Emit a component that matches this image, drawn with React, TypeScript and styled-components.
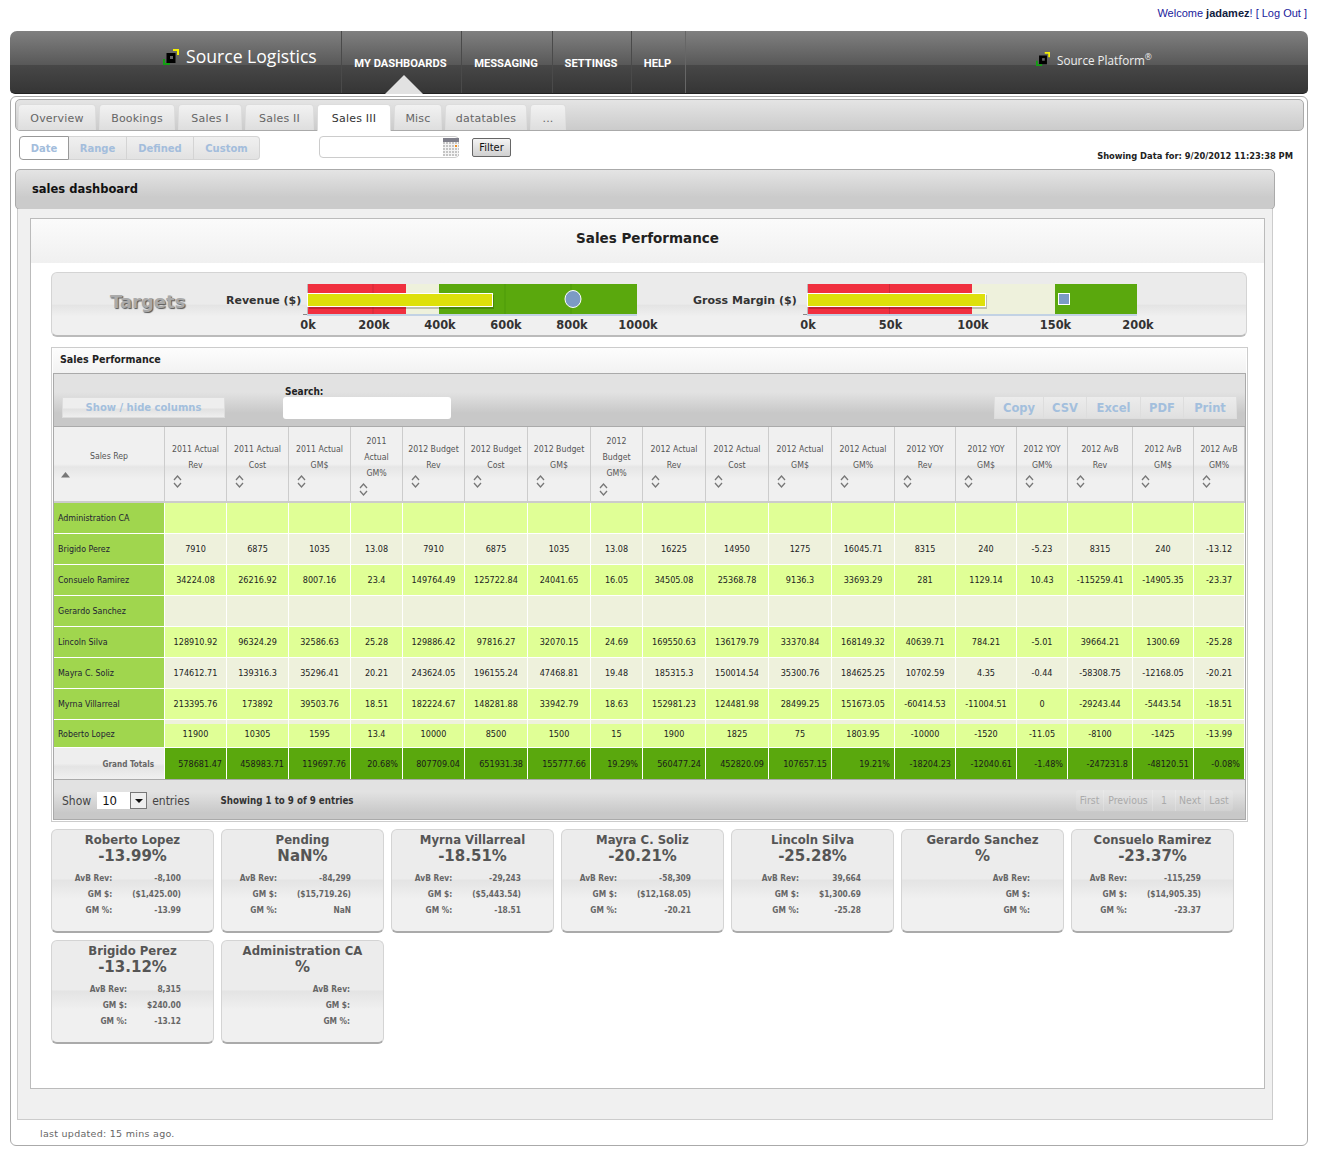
import styled, { createGlobalStyle } from "styled-components"

const GlobalStyle = createGlobalStyle`
    html, body {
        margin: 0;
        padding: 0;
        background: #fff;
    }
    body {
        font-family: "DejaVu Sans", Verdana, sans-serif;
        color: #333;
    }
`

const narrow = `"DejaVu Sans Condensed", "DejaVu Sans", sans-serif`

const Page = styled.div`
    width: 1319px;
    box-sizing: border-box;
    padding: 0 11px 9px 10px;
`

const TopBar = styled.div`
    height: 31px;
    box-sizing: border-box;
    padding: 6px 1px 0 0;
    text-align: right;
    font-family: "Liberation Sans", Arial, sans-serif;
    font-size: 11px;
    line-height: 14px;
    color: #1a1a9c;
    b {
        color: #102040;
    }
`

const Header = styled.div`
    position: relative;
    display: flex;
    height: 63px;
    box-sizing: border-box;
    border-radius: 7px 7px 5px 5px;
    border-bottom: 1px solid #222;
    background: linear-gradient(#808080 0%, #585858 55%, #474747 55.5%, #353535 100%);
`

const Brand = styled.div`
    width: 331px;
    box-sizing: border-box;
    padding: 13px 0 0 153px;
    display: flex;
    align-items: flex-start;
    gap: 7px;
    font-family: "Open Sans", sans-serif;
    font-size: 17.6px;
    line-height: 24px;
    color: #fff;
`

const NavItem = styled.div<{ $w: number }>`
    width: ${(p) => p.$w}px;
    box-sizing: border-box;
    padding: 25px 2px 0 0;
    border-left: 1px solid #4a4a4a;
    border-right: 1px solid #666;
    margin-right: -1px;
    text-align: center;
    font-family: Roboto, sans-serif;
    font-weight: 700;
    font-size: 11.2px;
    line-height: 16px;
    color: #fff;
`

const NavArrow = styled.div`
    position: absolute;
    left: 375px;
    bottom: -1px;
    width: 0;
    height: 0;
    border-left: 19px solid transparent;
    border-right: 19px solid transparent;
    border-bottom: 19px solid #e2e2e2;
`

const PlatformBrand = styled.div`
    margin-left: 351px;
    padding-top: 20px;
    display: flex;
    align-items: flex-start;
    gap: 7px;
    font-family: "Open Sans", sans-serif;
    font-size: 11.7px;
    line-height: 18px;
    color: #eee;
    sup {
        font-size: 8.5px;
        line-height: 0;
    }
`

const Content = styled.div`
    margin-top: 2px;
    height: 1050px;
    box-sizing: border-box;
    border: 1px solid #aaa;
    border-radius: 6px;
    padding: 2px 3px 0 4px;
`

const TabBar = styled.div`
    display: flex;
    align-items: flex-end;
    gap: 3px;
    height: 32px;
    box-sizing: border-box;
    padding-left: 2px;
    border: 1px solid #aaa;
    border-radius: 5px;
    background: linear-gradient(#e4e4e4, #cbcbcb);
`

const Tab = styled.div<{ $w: number; $active?: boolean }>`
    width: ${(p) => p.$w}px;
    height: ${(p) => (p.$active ? 27 : 26)}px;
    margin-bottom: ${(p) => (p.$active ? -1 : 0)}px;
    box-sizing: border-box;
    border: 1px solid #ddd;
    border-bottom: 0;
    border-radius: 4px 4px 0 0;
    background: ${(p) => (p.$active ? "#fff" : "linear-gradient(#f2f2f2, #dedede)")};
    text-align: center;
    font-size: 11px;
    letter-spacing: 0.2px;
    line-height: 27px;
    color: ${(p) => (p.$active ? "#333" : "#666")};
`

const Controls = styled.div`
    display: flex;
    align-items: flex-start;
    height: 38px;
    box-sizing: border-box;
    padding: 5px 11px 0 4px;
`

const Segments = styled.div`
    display: flex;
    height: 24px;
`

const Segment = styled.div<{ $w: number; $active?: boolean }>`
    width: ${(p) => p.$w}px;
    box-sizing: border-box;
    border: 1px solid ${(p) => (p.$active ? "#999" : "#d4d4d4")};
    border-left-width: ${(p) => (p.$active ? 1 : 0)}px;
    border-radius: ${(p) => (p.$active ? "4px 0 0 4px" : 0)};
    background: ${(p) => (p.$active ? "#fff" : "linear-gradient(#f0f0f0, #e2e2e2)")};
    text-align: center;
    font-size: 10px;
    font-weight: 700;
    line-height: 23px;
    color: #a3bddc;
    &:last-child {
        border-radius: 0 4px 4px 0;
    }
`

const DateInput = styled.div`
    display: flex;
    justify-content: flex-end;
    align-items: center;
    width: 140px;
    height: 22px;
    box-sizing: border-box;
    margin-left: 59px;
    border: 1px solid #ccc;
    border-radius: 4px;
    background: #fff;
    svg {
        margin-right: -1px;
    }
`

const FilterButton = styled.div`
    width: 39px;
    height: 19px;
    box-sizing: border-box;
    margin: 2px 0 0 13px;
    border: 1px solid #666;
    border-radius: 2px;
    background: linear-gradient(#f4f4f4, #d0d0d0);
    text-align: center;
    font-family: ${narrow};
    font-size: 11px;
    line-height: 18px;
    color: #111;
`

const ShowingData = styled.div`
    margin: 14px 0 0 auto;
    font-family: ${narrow};
    font-size: 9.25px;
    font-weight: 700;
    line-height: 12px;
    color: #222;
`

const DashBar = styled.div`
    width: 1260px;
    height: 41px;
    box-sizing: border-box;
    padding-left: 16px;
    border: 1px solid #aaa;
    border-radius: 5px;
    background: linear-gradient(#e4e4e4, #cbcbcb 70%);
    font-size: 11.5px;
    font-weight: 700;
    line-height: 38px;
    color: #111;
`

const GrayPanel = styled.div`
    width: 1256px;
    height: 911px;
    box-sizing: border-box;
    margin: -1px 0 0 2px;
    padding: 9px 7px 0 12px;
    border: 1px solid #ccc;
    border-top: 0;
    background: #f0f0f0;
`

const MainPanel = styled.div`
    width: 1235px;
    height: 871px;
    box-sizing: border-box;
    border: 1px solid #bbb;
    background: #fff;
`

const PanelTitle = styled.div`
    height: 44px;
    background: linear-gradient(#fbfbfb, #f0f0f0);
    text-align: center;
    font-size: 13.5px;
    font-weight: 700;
    line-height: 38px;
    color: #222;
`

const PanelBody = styled.div`
    padding: 9px 0 0 20px;
`

const TargetsBox = styled.div`
    display: flex;
    align-items: flex-start;
    width: 1196px;
    height: 65px;
    box-sizing: border-box;
    padding: 11px 0 0 58px;
    border: 1px solid #d4d4d4;
    border-bottom: 2px solid #bbb;
    border-radius: 6px;
    background: linear-gradient(#ebebeb 50%, #e4e4e4 52%, #f0f0f0 70%);
`

const TargetsTitle = styled.div`
    width: 116px;
    margin-top: 6px;
    font-size: 18px;
    font-weight: 700;
    line-height: 24px;
    color: #aaa;
    text-shadow: 1px 1px 1px #555;
`

const MetricLabel = styled.div<{ $w: number }>`
    width: ${(p) => p.$w}px;
    margin-top: 10px;
    white-space: nowrap;
    font-size: 11px;
    font-weight: 700;
    line-height: 14px;
    color: #333;
`

const ChartSvg = styled.svg`
    display: block;
    flex: none;
    margin-right: 26px;
    text {
        font-family: "DejaVu Sans", sans-serif;
        font-size: 11.4px;
        font-weight: 700;
        fill: #333;
        text-anchor: middle;
    }
`

const TableBox = styled.div`
    width: 1197px;
    box-sizing: border-box;
    margin-top: 10px;
    padding: 0 1px 1px 1px;
    border: 1px solid #ccc;
    background: #fff;
`

const TableTitle = styled.div`
    height: 25px;
    padding-left: 7px;
    background: linear-gradient(#fdfdfd, #f2f2f2);
    font-family: ${narrow};
    font-size: 10.6px;
    font-weight: 700;
    line-height: 22px;
    color: #222;
`

const TableFrame = styled.div`
    width: 1193px;
    box-sizing: border-box;
    border: 1px solid #aaa;
`

const TableToolbar = styled.div`
    display: flex;
    align-items: flex-start;
    height: 53px;
    box-sizing: border-box;
    padding: 10px 8px 0 8px;
    border-bottom: 1px solid #aaa;
    background: linear-gradient(#e2e2e2 35%, #c8c8c8 75%);
`

const ColumnsButton = styled.div`
    width: 163px;
    height: 21px;
    margin-top: 13px;
    box-sizing: border-box;
    border: 1px solid #ddd;
    background: linear-gradient(#eeeeee 50%, #e2e2e2 60%, #eeeeee);
    text-align: center;
    font-size: 10px;
    font-weight: 700;
    line-height: 19px;
    color: #a3bfdd;
`

const SearchGroup = styled.div`
    margin-left: 58px;
    font-family: ${narrow};
    font-size: 10px;
    font-weight: 700;
    line-height: 13px;
    color: #222;
    span {
        display: block;
        padding: 1px 0 0 2px;
        margin-bottom: -1px;
    }
`

const SearchField = styled.div`
    width: 168px;
    height: 22px;
    border-radius: 3px;
    background: #fff;
`

const ExportGroup = styled.div`
    display: flex;
    height: 23px;
    margin: 12px 0 0 auto;
`

const ExportButton = styled.div<{ $w: number }>`
    width: ${(p) => p.$w}px;
    box-sizing: border-box;
    border: 1px solid #ddd;
    border-left-width: 0;
    background: linear-gradient(#ececec, #e0e0e0);
    text-align: center;
    font-size: 11.5px;
    font-weight: 700;
    line-height: 22px;
    color: #a3bfdd;
    &:first-child {
        border-left-width: 1px;
    }
`

const Grid = styled.table`
    table-layout: fixed;
    width: 1191px;
    border-collapse: separate;
    border-spacing: 0;
    font-family: ${narrow};
    font-size: 9px;
`

const GridCol = styled.col<{ $w: number }>`
    width: ${(p) => p.$w}px;
`

const HeadCell = styled.th<{ $sorted?: boolean }>`
    height: 76px;
    box-sizing: border-box;
    padding: ${(p) => (p.$sorted ? 8 : 4)}px 2px 0;
    border-right: 1px solid #ccc;
    border-bottom: 2px solid #ccc;
    background: linear-gradient(#f0f0f0 50%, #e6e6e6 54%, #f0f0f0 70%);
    font-size: 8.7px;
    font-weight: 400;
    line-height: 16px;
    color: #555;
    text-align: center;
    white-space: pre-line;
`

const SortHolder = styled.span`
    display: block;
    height: 16px;
    padding-left: 6px;
    text-align: left;
    svg {
        display: block;
        margin-top: 2px;
    }
`

const SortedHolder = styled(SortHolder)`
    padding-left: 5px;
    svg {
        margin-top: 8px;
    }
`

const BodyCell = styled.td<{ $alt?: boolean }>`
    height: 31px;
    box-sizing: border-box;
    padding: 0 2px;
    border-right: 1px solid #fff;
    border-bottom: 1px solid #fff;
    background: ${(p) => (p.$alt ? "#eef1dc" : "#e0ff96")};
    text-align: center;
    color: #222;
    tr:last-child > & {
        height: 28px;
        background: linear-gradient(#eef1dc 4px, #e0ff96 4px);
    }
`

const NameCell = styled.td`
    height: 31px;
    box-sizing: border-box;
    padding: 0 0 0 4px;
    border-right: 1px solid #fff;
    border-bottom: 1px solid #fff;
    background: #a0d64e;
    font-size: 8.8px;
    color: #223;
    tr:last-child > & {
        height: 28px;
    }
`

const TotalLabel = styled.td`
    height: 31px;
    box-sizing: border-box;
    padding-right: 10px;
    border-right: 1px solid #fff;
    background: linear-gradient(#eeeeee 50%, #e4e4e4 60%, #f0f0f0);
    text-align: right;
    font-size: 8.1px;
    font-weight: 700;
    color: #666;
`

const TotalCell = styled.td`
    box-sizing: border-box;
    padding-right: 4px;
    border-right: 1px solid #fff;
    background: #5aa80d;
    text-align: right;
    font-weight: 400;
    color: #1a1a1a;
`

const TableFooter = styled.div`
    display: flex;
    align-items: flex-start;
    height: 40px;
    box-sizing: border-box;
    padding: 12px 12px 0 8px;
    border-top: 1px solid #aaa;
    background: linear-gradient(#e2e2e2 30%, #c8c8c8 85%);
    font-family: ${narrow};
    font-size: 12px;
    line-height: 18px;
    color: #444;
`

const PageSize = styled.div`
    display: flex;
    justify-content: space-between;
    width: 50px;
    height: 17px;
    box-sizing: border-box;
    margin: 0 5px 0 6px;
    padding-left: 5px;
    background: #fff;
    font-size: 13px;
    line-height: 17px;
    color: #111;
`

const PageSizeArrow = styled.div`
    display: flex;
    justify-content: center;
    align-items: center;
    width: 17px;
    box-sizing: border-box;
    border: 1px solid #777;
    background: #eee;
    &::after {
        content: "";
        border-left: 4px solid transparent;
        border-right: 4px solid transparent;
        border-top: 4px solid #111;
    }
`

const EntriesInfo = styled.div`
    margin-left: 31px;
    font-size: 9.7px;
    font-weight: 700;
    color: #333;
`

const Pager = styled.div`
    display: flex;
    margin: -2px 0 0 auto;
    height: 21px;
    border-radius: 3px;
    background: rgba(255, 255, 255, 0.12);
    font-size: 10.4px;
    line-height: 20px;
    color: #aaa;
`

const PagerItem = styled.div<{ $w: number }>`
    width: ${(p) => p.$w}px;
    text-align: center;
    border-right: 1px solid rgba(255, 255, 255, 0.2);
    &:last-child {
        border-right: 0;
    }
`

const Cards = styled.div`
    display: flex;
    flex-wrap: wrap;
    gap: 7px;
    width: 1197px;
    margin-top: 7px;
`

const Card = styled.div`
    width: 163px;
    height: 104px;
    box-sizing: border-box;
    padding-top: 2px;
    border: 1px solid #d4d4d4;
    border-bottom: 2px solid #aaa;
    border-radius: 6px;
    background: linear-gradient(#ececec 48%, #e4e4e4 50%, #f0f0f0 68%);
    text-align: center;
    color: #555;
`

const CardName = styled.div`
    font-size: 11.7px;
    font-weight: 700;
    line-height: 16px;
    white-space: nowrap;
`

const CardValue = styled.div`
    margin: 1px 0 6px;
    font-size: 15px;
    font-weight: 700;
    line-height: 15px;
`

const CardStats = styled.table`
    width: 129px;
    border-collapse: collapse;
    font-family: ${narrow};
    font-size: 8.3px;
    line-height: 16px;
    font-weight: 700;
    color: #666;
    td {
        padding: 0;
        white-space: nowrap;
        text-align: right;
    }
    td + td {
        width: 1px;
    }
    td + td:not(:empty) {
        padding-left: 20px;
    }
`

const LastUpdated = styled.div`
    margin-top: 7px;
    padding-left: 25px;
    font-size: 9.5px;
    letter-spacing: 0.28px;
    line-height: 14px;
    color: #666;
`

const LogoMark = ({ size }: { size: number }) => (
    <svg width={size} height={size} viewBox="0 0 16 16" style={{ flex: "none", marginTop: size > 14 ? 5 : 1 }}>
        <rect x="3.5" y="4" width="9" height="10" fill="#000" />
        <rect x="7" y="7" width="3" height="3" fill="#666" />
        <path d="M10 0h6v6h-2V2h-4z" fill="#f4f000" />
        <path d="M0 16v-6h2v4h5v2z" fill="#12a012" />
    </svg>
)

const SortIcon = () => (
    <svg width="9" height="13" viewBox="0 0 9 13" fill="none" stroke="#777" strokeWidth="1.3">
        <path d="M1 5l3.5-4L8 5" />
        <path d="M1 8l3.5 4L8 8" />
    </svg>
)

const SortedIcon = () => (
    <svg width="9" height="6" viewBox="0 0 9 6">
        <path d="M0 5.5L4.5 0 9 5.5z" fill="#777" />
    </svg>
)

const CalendarIcon = () => (
    <svg width="16" height="18" viewBox="0 0 16 18">
        <rect width="16" height="4" fill="#7f7f8a" />
        <rect y="4" width="16" height="14" fill="#c4c4c4" />
        <path d="M0 6.5h16M0 9.5h16M0 12.5h16M0 15.5h16M2.5 4v14M5.5 4v14M8.5 4v14M11.5 4v14M14.5 4v14" stroke="#f4f4f4" />
        <rect x="12" y="7" width="2" height="2" fill="#f09020" />
    </svg>
)

type BulletProps = {
    ticks: string[]
    red: number
    cream: number
    bar: number
    marker: "circle" | "square"
}

// width of the plot area in px, the svg has 10px spare on the left for the 0k label
const plot = 330

const Bullet = ({ ticks, red, cream, bar, marker }: BulletProps) => (
    <ChartSvg width="370" height="48" viewBox="0 0 370 48">
        <rect x="10" y="0" width={red} height="30" fill="#f0303f" />
        <rect x={10 + red} y="0" width={cream - red} height="30" fill="#eef1dc" />
        <rect x={10 + cream} y="0" width={plot - cream} height="30" fill="#5aa80d" />
        {ticks.map((t, i) => {
            const x = 10 + (plot * i) / (ticks.length - 1)
            return (
                <g key={t}>
                    {i > 0 && i < ticks.length - 1 && x < 10 + red && <line x1={x} x2={x} y1="0" y2="30" stroke="#d02a38" />}
                    {i > 0 && i < ticks.length - 1 && x > 10 + cream && <line x1={x} x2={x} y1="0" y2="30" stroke="#4c9a0a" />}
                    <text x={x + 1} y="45">{t}</text>
                </g>
            )
        })}
        <rect x="6" y="30" width="4" height="1" fill="#888" />
        <rect x="10" y="30" width={plot} height="2" fill="#c2d2e4" />
        <rect x="10" y="0" width="1" height="30" fill="#bbb" />
        <rect x="12" y="11" width={bar} height="14" fill="#000" opacity="0.2" />
        <rect x="10.5" y="9.5" width={bar} height="13" fill="#dee00a" stroke="#fff" />
        {marker === "circle" ? (
            <ellipse cx="276" cy="15" rx="8" ry="8.5" fill="#7c9bc4" stroke="#fff" />
        ) : (
            <rect x="261.5" y="9.5" width="11" height="11" fill="#7c9bc4" stroke="#fff" />
        )}
    </ChartSvg>
)

const columns = [
    { w: 111, t: "Sales Rep" },
    { w: 62, t: "2011 Actual\nRev" },
    { w: 62, t: "2011 Actual\nCost" },
    { w: 62, t: "2011 Actual\nGM$" },
    { w: 52, t: "2011\nActual\nGM%" },
    { w: 62, t: "2012 Budget\nRev" },
    { w: 63, t: "2012 Budget\nCost" },
    { w: 63, t: "2012 Budget\nGM$" },
    { w: 52, t: "2012\nBudget\nGM%" },
    { w: 63, t: "2012 Actual\nRev" },
    { w: 63, t: "2012 Actual\nCost" },
    { w: 63, t: "2012 Actual\nGM$" },
    { w: 63, t: "2012 Actual\nGM%" },
    { w: 61, t: "2012 YOY\nRev" },
    { w: 61, t: "2012 YOY\nGM$" },
    { w: 51, t: "2012 YOY\nGM%" },
    { w: 65, t: "2012 AvB\nRev" },
    { w: 61, t: "2012 AvB\nGM$" },
    { w: 51, t: "2012 AvB\nGM%" },
]

const empty = Array(18).fill("")

const rows = [
    { name: "Administration CA", alt: false, v: empty },
    { name: "Brigido Perez", alt: true, v: ["7910", "6875", "1035", "13.08", "7910", "6875", "1035", "13.08", "16225", "14950", "1275", "16045.71", "8315", "240", "-5.23", "8315", "240", "-13.12"] },
    { name: "Consuelo Ramirez", alt: false, v: ["34224.08", "26216.92", "8007.16", "23.4", "149764.49", "125722.84", "24041.65", "16.05", "34505.08", "25368.78", "9136.3", "33693.29", "281", "1129.14", "10.43", "-115259.41", "-14905.35", "-23.37"] },
    { name: "Gerardo Sanchez", alt: true, v: empty },
    { name: "Lincoln Silva", alt: false, v: ["128910.92", "96324.29", "32586.63", "25.28", "129886.42", "97816.27", "32070.15", "24.69", "169550.63", "136179.79", "33370.84", "168149.32", "40639.71", "784.21", "-5.01", "39664.21", "1300.69", "-25.28"] },
    { name: "Mayra C. Soliz", alt: true, v: ["174612.71", "139316.3", "35296.41", "20.21", "243624.05", "196155.24", "47468.81", "19.48", "185315.3", "150014.54", "35300.76", "184625.25", "10702.59", "4.35", "-0.44", "-58308.75", "-12168.05", "-20.21"] },
    { name: "Myrna Villarreal", alt: false, v: ["213395.76", "173892", "39503.76", "18.51", "182224.67", "148281.88", "33942.79", "18.63", "152981.23", "124481.98", "28499.25", "151673.05", "-60414.53", "-11004.51", "0", "-29243.44", "-5443.54", "-18.51"] },
    { name: "Roberto Lopez", alt: false, v: ["11900", "10305", "1595", "13.4", "10000", "8500", "1500", "15", "1900", "1825", "75", "1803.95", "-10000", "-1520", "-11.05", "-8100", "-1425", "-13.99"] },
]

const totals = ["578681.47", "458983.71", "119697.76", "20.68%", "807709.04", "651931.38", "155777.66", "19.29%", "560477.24", "452820.09", "107657.15", "19.21%", "-18204.23", "-12040.61", "-1.48%", "-247231.8", "-48120.51", "-0.08%"]

const cards = [
    { name: "Roberto Lopez", pct: "-13.99%", rev: "-8,100", gm: "($1,425.00)", gp: "-13.99" },
    { name: "Pending", pct: "NaN%", rev: "-84,299", gm: "($15,719.26)", gp: "NaN" },
    { name: "Myrna Villarreal", pct: "-18.51%", rev: "-29,243", gm: "($5,443.54)", gp: "-18.51" },
    { name: "Mayra C. Soliz", pct: "-20.21%", rev: "-58,309", gm: "($12,168.05)", gp: "-20.21" },
    { name: "Lincoln Silva", pct: "-25.28%", rev: "39,664", gm: "$1,300.69", gp: "-25.28" },
    { name: "Gerardo Sanchez", pct: "%", rev: "", gm: "", gp: "" },
    { name: "Consuelo Ramirez", pct: "-23.37%", rev: "-115,259", gm: "($14,905.35)", gp: "-23.37" },
    { name: "Brigido Perez", pct: "-13.12%", rev: "8,315", gm: "$240.00", gp: "-13.12" },
    { name: "Administration CA", pct: "%", rev: "", gm: "", gp: "" },
]

const App = () => {
    return (
        <Page>
            <GlobalStyle />
            <TopBar>
                Welcome <b>jadamez</b>! [ Log Out ]
            </TopBar>
            <Header>
                <Brand>
                    <LogoMark size={16} />
                    Source Logistics
                </Brand>
                <NavItem $w={121}>MY DASHBOARDS</NavItem>
                <NavItem $w={92}>MESSAGING</NavItem>
                <NavItem $w={80}>SETTINGS</NavItem>
                <NavItem $w={55}>HELP</NavItem>
                <PlatformBrand>
                    <LogoMark size={14} />
                    <span>Source Platform<sup>®</sup></span>
                </PlatformBrand>
                <NavArrow />
            </Header>
            <Content>
                <TabBar>
                    <Tab $w={78}>Overview</Tab>
                    <Tab $w={76}>Bookings</Tab>
                    <Tab $w={64}>Sales I</Tab>
                    <Tab $w={69}>Sales II</Tab>
                    <Tab $w={74} $active>Sales III</Tab>
                    <Tab $w={48}>Misc</Tab>
                    <Tab $w={82}>datatables</Tab>
                    <Tab $w={36}>...</Tab>
                </TabBar>
                <Controls>
                    <Segments>
                        <Segment $w={50} $active>Date</Segment>
                        <Segment $w={58}>Range</Segment>
                        <Segment $w={67}>Defined</Segment>
                        <Segment $w={66}>Custom</Segment>
                    </Segments>
                    <DateInput>
                        <CalendarIcon />
                    </DateInput>
                    <FilterButton>Filter</FilterButton>
                    <ShowingData>Showing Data for: 9/20/2012 11:23:38 PM</ShowingData>
                </Controls>
                <DashBar>sales dashboard</DashBar>
                <GrayPanel>
                    <MainPanel>
                        <PanelTitle>Sales Performance</PanelTitle>
                        <PanelBody>
                            <TargetsBox>
                                <TargetsTitle>Targets</TargetsTitle>
                                <MetricLabel $w={71}>Revenue ($)</MetricLabel>
                                <Bullet ticks={["0k", "200k", "400k", "600k", "800k", "1000k"]} red={99} cream={132} bar={185} marker="circle" />
                                <MetricLabel $w={104}>Gross Margin ($)</MetricLabel>
                                <Bullet ticks={["0k", "50k", "100k", "150k", "200k"]} red={165} cream={248} bar={178} marker="square" />
                            </TargetsBox>
                            <TableBox>
                                <TableTitle>Sales Performance</TableTitle>
                                <TableFrame>
                                    <TableToolbar>
                                        <ColumnsButton>Show / hide columns</ColumnsButton>
                                        <SearchGroup>
                                            <span>Search:</span>
                                            <SearchField />
                                        </SearchGroup>
                                        <ExportGroup>
                                            <ExportButton $w={50}>Copy</ExportButton>
                                            <ExportButton $w={43}>CSV</ExportButton>
                                            <ExportButton $w={54}>Excel</ExportButton>
                                            <ExportButton $w={43}>PDF</ExportButton>
                                            <ExportButton $w={53}>Print</ExportButton>
                                        </ExportGroup>
                                    </TableToolbar>
                                    <Grid>
                                        <colgroup>
                                            {columns.map((c) => (
                                                <GridCol key={c.t} $w={c.w} />
                                            ))}
                                        </colgroup>
                                        <thead>
                                            <tr>
                                                {columns.map((c, i) => (
                                                    <HeadCell key={c.t} $sorted={i === 0}>
                                                        {c.t}
                                                        {i === 0 ? (
                                                            <SortedHolder><SortedIcon /></SortedHolder>
                                                        ) : (
                                                            <SortHolder><SortIcon /></SortHolder>
                                                        )}
                                                    </HeadCell>
                                                ))}
                                            </tr>
                                        </thead>
                                        <tbody>
                                            {rows.map((r) => (
                                                <tr key={r.name}>
                                                    <NameCell>{r.name}</NameCell>
                                                    {r.v.map((v, i) => (
                                                        <BodyCell key={i} $alt={r.alt}>{v}</BodyCell>
                                                    ))}
                                                </tr>
                                            ))}
                                        </tbody>
                                        <tfoot>
                                            <tr>
                                                <TotalLabel>Grand Totals</TotalLabel>
                                                {totals.map((v) => (
                                                    <TotalCell key={v}>{v}</TotalCell>
                                                ))}
                                            </tr>
                                        </tfoot>
                                    </Grid>
                                    <TableFooter>
                                        Show
                                        <PageSize>
                                            10
                                            <PageSizeArrow />
                                        </PageSize>
                                        entries
                                        <EntriesInfo>Showing 1 to 9 of 9 entries</EntriesInfo>
                                        <Pager>
                                            <PagerItem $w={27}>First</PagerItem>
                                            <PagerItem $w={48}>Previous</PagerItem>
                                            <PagerItem $w={22}>1</PagerItem>
                                            <PagerItem $w={28}>Next</PagerItem>
                                            <PagerItem $w={28}>Last</PagerItem>
                                        </Pager>
                                    </TableFooter>
                                </TableFrame>
                            </TableBox>
                            <Cards>
                                {cards.map((c) => (
                                    <Card key={c.name}>
                                        <CardName>{c.name}</CardName>
                                        <CardValue>{c.pct}</CardValue>
                                        <CardStats>
                                            <tbody>
                                                <tr><td>AvB Rev:</td><td>{c.rev}</td></tr>
                                                <tr><td>GM $:</td><td>{c.gm}</td></tr>
                                                <tr><td>GM %:</td><td>{c.gp}</td></tr>
                                            </tbody>
                                        </CardStats>
                                    </Card>
                                ))}
                            </Cards>
                        </PanelBody>
                    </MainPanel>
                </GrayPanel>
                <LastUpdated>last updated: 15 mins ago.</LastUpdated>
            </Content>
        </Page>
    )
}

export default App
